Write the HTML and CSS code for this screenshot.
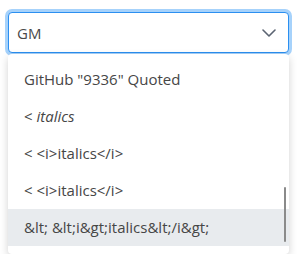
FILE: index.html
```html
<!DOCTYPE html>
<html lang="en">
<head>
    <meta charset="UTF-8">
    <meta name="viewport" content="width=device-width, initial-scale=1.0">
    <title>Select</title>
    <link rel="stylesheet" href="styles.css">
</head>
<body>
    <div class="field">
        <div class="select focused">
            <span class="value">GM</span>
            <svg class="chevron" width="14" height="8" viewBox="0 0 14 8">
                <path d="M1 1 L7 7 L13 1" fill="none" stroke="#5b6472" stroke-width="1.6" stroke-linecap="round" stroke-linejoin="round"/>
            </svg>
        </div>

        <!-- options list, scrolled to the bottom -->
        <div class="menu">
            <ul class="options">
                <li>GitHub "9336" Quoted</li>
                <li>&lt; <i>italics</i></li>
                <li>&lt; &lt;i&gt;italics&lt;/i&gt;</li>
                <li>&lt; &lt;i&gt;italics&lt;/i&gt;</li>
                <li class="active">&amp;lt; &amp;lt;i&amp;gt;italics&amp;lt;/i&amp;gt;</li>
            </ul>
            <div class="scroll-thumb"></div>
        </div>
    </div>
</body>
</html>
```

FILE: styles.css
```css
body {
    margin: 0;
    font-family: "Open Sans", Arial, sans-serif;
    background-color: #fff;
    color: #444;
}
.field {
    padding: 12px 12px 0 8px;
}
.select {
    height: 39px;
    display: flex;
    align-items: center;
    justify-content: space-between;
    padding: 0 12px 0 8px;
    border: 1px solid #2b8ff0;
    border-radius: 4px;
    box-shadow: 0 0 0 3px #a6d2fb;
    background-color: #fff;
}
.value {
    font-size: 15px;
    color: #4a4a4a;
}
.chevron {
    display: block;
}
.menu {
    position: relative;
    height: 200px;
    margin-top: 1px;
    background-color: #fff;
    border-radius: 4px;
    box-shadow: 0 3px 8px rgba(0, 0, 0, 0.18);
    overflow: hidden;
}
.options {
    list-style: none;
    margin: 0;
    padding: 0 0 8px 0;
    height: 100%;
    box-sizing: border-box;
    display: flex;
    flex-direction: column;
    justify-content: flex-end;
}
.options li {
    flex-shrink: 0;
    height: 37px;
    line-height: 37px;
    padding: 0 16px;
    font-size: 15px;
    color: #464646;
    white-space: nowrap;
}
.options li.active {
    background-color: #e8ebee;
}
.scroll-thumb {
    position: absolute;
    right: 3px;
    top: 133px;
    width: 2px;
    height: 55px;
    border-radius: 1px;
    background-color: #8a8a8a;
}
```
